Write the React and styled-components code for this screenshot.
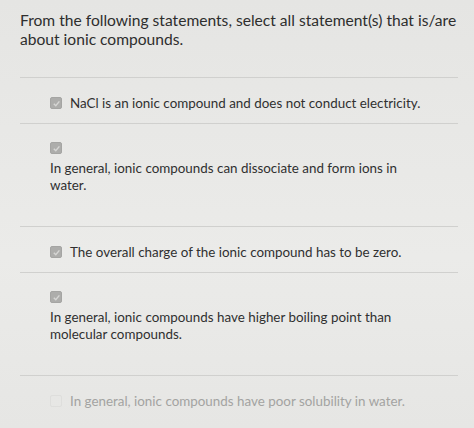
import React from 'react'
import styled, { createGlobalStyle } from 'styled-components'

const GlobalStyle = createGlobalStyle`
  html, body {
    margin: 0;
    padding: 0;
    background: #e7e7e5;
  }
  body {
    font-family: Lato, "Open Sans", sans-serif;
    color: #333;
  }
`;

const Page = styled.main`
  width: 474px;
  height: 428px;
  overflow: hidden;
  padding: 11px 16px 0 20px;
  box-sizing: border-box;
  background: linear-gradient(180deg, #e5e5e3 0%, #ebebe9 60%, #e6e6e4 100%);
`;

const Question = styled.h1`
  margin: 0 0 28px;
  font-size: 15.6px;
  font-weight: 400;
  line-height: 19px;
  color: #2e2e2e;
`;

const OptionList = styled.div`
  display: flex;
  flex-direction: column;
`;

const Option = styled.label`
  display: flex;
  flex-direction: ${p => (p.$stacked ? 'column' : 'row')};
  align-items: ${p => (p.$stacked ? 'flex-start' : 'center')};
  gap: ${p => (p.$stacked ? '6px' : '8px')};
  border-top: 1px solid #d0d0ce;
  padding: ${p => (p.$stacked ? '18px 0 32px 30px' : '15px 0 10px 30px')};
  font-size: 13.4px;
  line-height: ${p => (p.$stacked ? '17px' : '20px')};
  white-space: ${p => (p.$stacked ? 'normal' : 'nowrap')};
  color: ${p => (p.$muted ? '#a3a3a1' : '#303030')};
`;

const Box = styled.span`
  flex: none;
  width: 12px;
  height: 12px;
  border-radius: 2px;
  box-sizing: border-box;
  display: inline-flex;
  align-items: center;
  justify-content: center;
  background: ${p => (p.$checked ? '#adadab' : 'transparent')};
  border: 1px solid ${p => (p.$checked ? '#a5a5a3' : '#dededc')};
`;

function CheckBox({ checked }) {
  return (
    <Box $checked={checked}>
      {checked && (
        <svg width="9" height="9" viewBox="0 0 10 10">
          <path d="M2 5.2 L4.2 7.4 L8.2 2.6" fill="none" stroke="#d6d6d4" strokeWidth="1.6" />
        </svg>
      )}
    </Box>
  )
}

const options = [
  { text: 'NaCl is an ionic compound and does not conduct electricity.', checked: true },
  { text: 'In general, ionic compounds can dissociate and form ions in water.', checked: true, stacked: true },
  { text: 'The overall charge of the ionic compound has to be zero.', checked: true },
  { text: 'In general, ionic compounds have higher boiling point than molecular compounds.', checked: true, stacked: true },
  { text: 'In general, ionic compounds have poor solubility in water.', checked: false, muted: true },
];

const OptionText = styled.span`
  max-width: ${p => (p.$stacked ? '360px' : 'none')};
`;

export default function App() {
  return (
    <Page>
      <GlobalStyle />
      <Question>
        From the following statements, select all statement(s) that is/are about ionic compounds.
      </Question>
      <OptionList>
        {options.map((o, i) => (
          <Option key={i} $stacked={o.stacked} $muted={o.muted}>
            <CheckBox checked={o.checked} />
            <OptionText $stacked={o.stacked}>{o.text}</OptionText>
          </Option>
        ))}
      </OptionList>
    </Page>
  )
}
